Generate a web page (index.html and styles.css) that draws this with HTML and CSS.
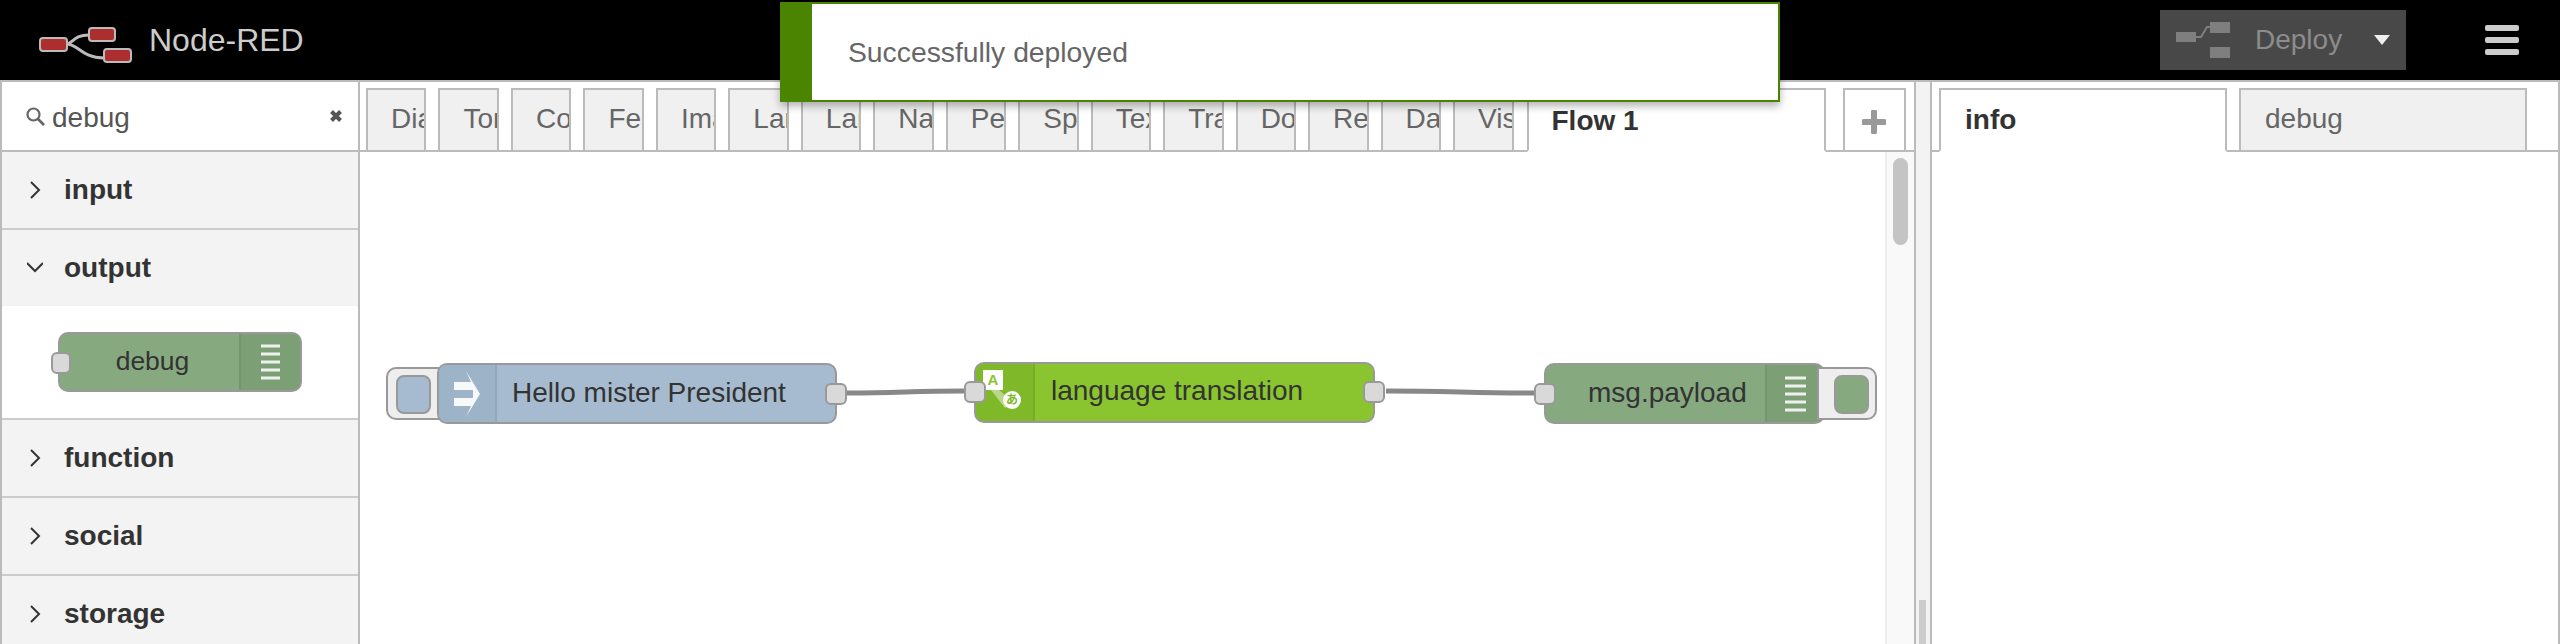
FILE: index.html
```html
<!DOCTYPE html>
<html lang="en">
<head>
    <meta charset="UTF-8">
    <title>Node-RED</title>
    <link rel="stylesheet" href="styles.css">
</head>
<body>
    <div class="header">
        <div class="brand">
            <svg class="logo" width="96" height="38" viewBox="0 0 96 38">
                <path d="M27 12 C 34 12, 34 3, 50 3 M27 12 C 40 12, 42 26, 65 26" transform="translate(0 5)" fill="none" stroke="#bbb" stroke-width="3"/>
                <rect x="1" y="11" width="27" height="13" rx="3" fill="#ad2e2e" stroke="#bbb" stroke-width="2"/>
                <rect x="50" y="1" width="26" height="13" rx="3" fill="#ad2e2e" stroke="#bbb" stroke-width="2"/>
                <rect x="65" y="22" width="27" height="13" rx="3" fill="#ad2e2e" stroke="#bbb" stroke-width="2"/>
            </svg>
            <span class="brand-name">Node-RED</span>
        </div>
        <div class="header-tools">
            <div class="deploy">
                <svg width="54" height="36" viewBox="0 0 54 36">
                    <rect x="0" y="10" width="20" height="10" fill="#7f7f7f"/>
                    <path d="M20 15 L25 15 L31 5 L34 5" fill="none" stroke="#7f7f7f" stroke-width="2"/>
                    <rect x="34" y="0" width="20" height="11" fill="#7f7f7f"/>
                    <rect x="34" y="25" width="20" height="11" fill="#7f7f7f"/>
                </svg>
                <span class="deploy-label">Deploy</span>
                <svg width="16" height="10" viewBox="0 0 16 10"><path d="M0 0 H16 L8 10 Z" fill="#eee"/></svg>
            </div>
            <div class="menu-btn">
                <span></span>
                <span></span>
                <span></span>
            </div>
        </div>
    </div>

    <div class="toast">
        <div class="toast-bar"></div>
        <div class="toast-text">Successfully deployed</div>
    </div>

    <div class="main">
        <div class="palette">
            <div class="search">
                <svg width="19" height="19" viewBox="0 0 19 19">
                    <circle cx="7.5" cy="7.5" r="6" fill="none" stroke="#666" stroke-width="2.2"/>
                    <path d="M12 12 L18 18" stroke="#666" stroke-width="2.6"/>
                </svg>
                <span class="search-text">debug</span>
                <svg class="search-clear" width="14" height="14" viewBox="0 0 14 14">
                    <path d="M2.5 2.5 L11.5 11.5 M11.5 2.5 L2.5 11.5" stroke="#555" stroke-width="4"/>
                </svg>
            </div>

            <div class="category">
                <svg class="chevron" width="16" height="18" viewBox="0 0 16 18"><path d="M4 1 L12 9 L4 17" fill="none" stroke="#333" stroke-width="2"/></svg>
                <span>input</span>
            </div>
            <div class="category open">
                <svg class="chevron" width="16" height="18" viewBox="0 0 16 18"><path d="M0 5 L8 13 L16 5" fill="none" stroke="#333" stroke-width="2"/></svg>
                <span>output</span>
            </div>
            <div class="category-body">
                <div class="palette-node">
                    <div class="port palette-port"></div>
                    <div class="palette-label">debug</div>
                    <div class="node-icon icon-right">
                        <svg width="19" height="36" viewBox="0 0 19 36"><path d="M0 2 H19 M0 10 H19 M0 18 H19 M0 26 H19 M0 34 H19" stroke="#eef2ec" stroke-width="3"/></svg>
                    </div>
                </div>
            </div>
            <div class="category">
                <svg class="chevron" width="16" height="18" viewBox="0 0 16 18"><path d="M4 1 L12 9 L4 17" fill="none" stroke="#333" stroke-width="2"/></svg>
                <span>function</span>
            </div>
            <div class="category">
                <svg class="chevron" width="16" height="18" viewBox="0 0 16 18"><path d="M4 1 L12 9 L4 17" fill="none" stroke="#333" stroke-width="2"/></svg>
                <span>social</span>
            </div>
            <div class="category">
                <svg class="chevron" width="16" height="18" viewBox="0 0 16 18"><path d="M4 1 L12 9 L4 17" fill="none" stroke="#333" stroke-width="2"/></svg>
                <span>storage</span>
            </div>
        </div>

        <div class="workspace">
            <div class="tabs">
                <div class="tab small-tab"><span>Dial</span></div>
                <div class="tab small-tab"><span>Tone</span></div>
                <div class="tab small-tab"><span>Conv</span></div>
                <div class="tab small-tab"><span>Feat</span></div>
                <div class="tab small-tab"><span>Imag</span></div>
                <div class="tab small-tab"><span>Lang</span></div>
                <div class="tab small-tab"><span>Lang</span></div>
                <div class="tab small-tab"><span>Natu</span></div>
                <div class="tab small-tab"><span>Pers</span></div>
                <div class="tab small-tab"><span>Spee</span></div>
                <div class="tab small-tab"><span>Text</span></div>
                <div class="tab small-tab"><span>Tran</span></div>
                <div class="tab small-tab"><span>Docu</span></div>
                <div class="tab small-tab"><span>Retr</span></div>
                <div class="tab small-tab"><span>Data</span></div>
                <div class="tab small-tab"><span>Visu</span></div>
                <div class="tab active flow-tab">Flow 1</div>
                <div class="add-tab">
                    <svg width="24" height="24" viewBox="0 0 24 24"><path d="M12 2 V22 M2 12 H22" stroke="#999" stroke-width="6" stroke-linecap="round"/></svg>
                </div>
            </div>

            <div class="canvas-wrap">
                <div class="canvas">
                    <svg class="wires" width="1525" height="492" viewBox="0 0 1525 492">
                        <path d="M487 241 C 540 241, 550 239, 604 239" fill="none" stroke="#888" stroke-width="5"/>
                        <path d="M1026 239 C 1090 239, 1110 241, 1174 241" fill="none" stroke="#888" stroke-width="5"/>
                    </svg>

                    <div class="node-tail inject-tail"><div class="tail-btn blue"></div></div>
                    <div class="node blue node-hello">
                        <div class="node-icon icon-blue">
                            <svg width="26" height="48" viewBox="0 0 26 48">
                                <path d="M12 1 L26 24 L12 47 L17 36 H0 V28 H19 V20 H0 V12 H17 Z" fill="#fff" fill-opacity="0.92"/>
                            </svg>
                        </div>
                        <div class="node-label">Hello mister President</div>
                        <div class="port port-out"></div>
                    </div>

                    <div class="node lime node-lang">
                        <div class="port port-in"></div>
                        <div class="node-icon icon-lime">
                            <svg width="44" height="46" viewBox="0 0 44 46">
                                <path d="M12 16 L30 33 L22 38 L8 20 Z" fill="#fff" fill-opacity="0.45"/>
                                <rect x="0" y="0" width="20" height="20" fill="#fff"/>
                                <circle cx="29" cy="30" r="9" fill="#fff"/>
                                <text x="10" y="15" class="icon-a">A</text>
                                <text x="29" y="34" class="icon-b">あ</text>
                            </svg>
                        </div>
                        <div class="node-label">language translation</div>
                        <div class="port port-out"></div>
                    </div>

                    <div class="node green node-debug">
                        <div class="port port-in"></div>
                        <div class="node-label">msg.payload</div>
                        <div class="node-icon icon-right">
                            <svg width="21" height="36" viewBox="0 0 21 36"><path d="M0 2 H21 M0 10 H21 M0 18 H21 M0 26 H21 M0 34 H21" stroke="#eef2ec" stroke-width="3"/></svg>
                        </div>
                    </div>
                    <div class="node-tail debug-tail"><div class="tail-btn green"></div></div>
                </div>
                <div class="scrollbar"><div class="scroll-thumb"></div></div>
            </div>
        </div>

        <div class="separator"><div class="separator-thumb"></div></div>

        <div class="sidebar">
            <div class="tabs sidebar-tabs">
                <div class="tab active side-tab">info</div>
                <div class="tab side-tab">debug</div>
            </div>
        </div>
    </div>
</body>
</html>
```

FILE: styles.css
```css
* {
    box-sizing: border-box;
}

html, body {
    height: 100%;
    margin: 0;
    overflow: hidden;
}

body {
    font-family: "Liberation Sans", Arial, sans-serif;
    font-size: 28px;
    color: #333;
    background-color: #fff;
}

/* header */
.header {
    height: 80px;
    background-color: #000;
    display: flex;
    justify-content: space-between;
    align-items: center;
}

.brand {
    display: flex;
    align-items: center;
    padding-left: 39px;
    gap: 14px;
}

.logo {
    margin-top: 12px;
}

.brand-name {
    font-size: 32px;
    color: #ccc;
}

.header-tools {
    display: flex;
    align-items: center;
    padding-right: 41px;
}

.deploy {
    width: 246px;
    height: 60px;
    background-color: #484848;
    display: flex;
    align-items: center;
    padding-left: 16px;
}

.deploy-label {
    color: #8c8c8c;
    margin-left: 25px;
    margin-right: 32px;
}

.menu-btn {
    width: 34px;
    margin-left: 79px;
    display: flex;
    flex-direction: column;
    gap: 6px;
}

.menu-btn span {
    height: 6px;
    border-radius: 2px;
    background-color: #ccc;
}

/* deploy message */
.toast {
    position: absolute;
    top: 2px;
    left: 780px;
    width: 1000px;
    height: 100px;
    display: flex;
    background-color: #fff;
    border: 2px solid #4b8400;
    box-shadow: 0 4px 8px rgba(0, 0, 0, 0.3);
    z-index: 10;
}

.toast-bar {
    width: 30px;
    background-color: #4b8400;
}

.toast-text {
    color: #666;
    font-size: 28.3px;
    padding: 32px 0 0 36px;
}

/* main area */
.main {
    height: 564px;
    display: flex;
    border-top: 2px solid #bbb;
}

.palette {
    width: 360px;
    flex: none;
    border-left: 2px solid #bbb;
    border-right: 2px solid #bbb;
    overflow: hidden;
}

.search {
    height: 70px;
    display: flex;
    align-items: center;
    padding-left: 24px;
    padding-right: 15px;
    border-bottom: 2px solid #bbb;
    color: #555;
}

.search-text {
    margin-left: 7px;
    margin-top: 4px;
}

.search-clear {
    margin-left: auto;
}

.category {
    height: 78px;
    display: flex;
    align-items: center;
    background-color: #f3f3f3;
    border-bottom: 2px solid #ccc;
    font-weight: bold;
    padding-left: 25px;
}

.category span {
    margin-left: 21px;
}

.category.open {
    height: 76px;
    border-bottom: none;
    padding-bottom: 2px;
}

.category.open span {
    margin-top: 2px;
}

.chevron {
    flex: none;
}

.category-body {
    height: 114px;
    padding: 26px 0 0 56px;
    border-bottom: 2px solid #ccc;
}

.palette-node {
    position: relative;
    width: 244px;
    height: 60px;
    display: flex;
    background-color: #87a980;
    border: 2px solid #999;
    border-radius: 10px;
}

.palette-label {
    flex: 1;
    text-align: center;
    font-size: 26.5px;
    line-height: 54px;
    padding-left: 6px;
}

.port {
    position: absolute;
    width: 22px;
    height: 22px;
    background-color: #d9d9d9;
    border: 2px solid #999;
    border-radius: 6px;
}

.palette-port {
    left: -9px;
    top: 18px;
    width: 20px;
}

/* node parts */
.node-icon {
    display: flex;
    align-items: center;
    justify-content: center;
    flex: none;
}

.icon-right {
    width: 61px;
    background-color: #7d9f76;
    border-left: 2px solid #76966f;
    border-radius: 0 8px 8px 0;
}

.node-debug .icon-right {
    width: 58px;
}

.icon-blue {
    width: 58px;
    background-color: #9db3c8;
    border-right: 2px solid #92a8bd;
    border-radius: 8px 0 0 8px;
}

.icon-lime {
    width: 59px;
    background-color: #7fb829;
    border-right: 2px solid #76ad24;
    border-radius: 8px 0 0 8px;
}

.icon-a {
    font-size: 15px;
    font-weight: bold;
    fill: #8ac52f;
    text-anchor: middle;
}

.icon-b {
    font-family: "Noto Sans CJK JP", sans-serif;
    font-size: 12px;
    font-weight: bold;
    fill: #7fb829;
    text-anchor: middle;
}

/* tabs */
.workspace {
    width: 1556px;
    flex: none;
    display: flex;
    flex-direction: column;
    border-right: 2px solid #bbb;
}

.tabs {
    height: 70px;
    flex: none;
    display: flex;
    align-items: flex-end;
    padding-left: 6px;
    gap: 12px;
    border-bottom: 2px solid #bbb;
}

.tab {
    height: 64px;
    margin-bottom: -2px;
    background-color: #f0f0f0;
    border: 2px solid #bbb;
    color: #666;
    overflow: hidden;
    white-space: nowrap;
}

.small-tab {
    width: 60.47px;
    padding: 13px 0 0 23px;
}

.small-tab span {
    display: block;
    overflow: hidden;
}

.tab.active {
    background-color: #fff;
    border-bottom-color: #fff;
    color: #333;
    font-weight: bold;
}

.flow-tab {
    width: 299px;
    margin-left: 1px;
    padding: 15px 0 0 23px;
}

.add-tab {
    width: 63px;
    height: 62px;
    margin-left: 5px;
    margin-bottom: 0;
    border: 2px solid #bbb;
    border-bottom: none;
    display: flex;
    align-items: center;
    justify-content: center;
    padding-top: 4px;
}

.side-tab {
    width: 288px;
    padding: 13px 0 0 24px;
}

.tab.active.side-tab {
    padding-top: 14px;
}

.sidebar-tabs {
    padding-left: 7px;
}

.canvas-wrap {
    flex: 1;
    display: flex;
    min-height: 0;
}

.canvas {
    position: relative;
    width: 1525px;
    height: 100%;
    flex: none;
}

.wires {
    position: absolute;
    left: 0;
    top: 0;
}

.scrollbar {
    flex: 1;
    padding: 6px 6px 0 6px;
    background-color: #f9f9f9;
    border-left: 2px solid #eee;
}

.scroll-thumb {
    height: 87px;
    border-radius: 8px;
    background-color: #c4c4c4;
}

/* flow nodes */
.node {
    position: absolute;
    height: 61px;
    display: flex;
    border: 2px solid #999;
    border-radius: 10px;
}

.node-label {
    flex: 1;
    line-height: 55px;
    white-space: nowrap;
}

.blue {
    background-color: #a6bbcf;
}

.green {
    background-color: #87a980;
}

.lime {
    background-color: #8ac52f;
}

.node-hello {
    left: 77px;
    top: 211px;
    width: 400px;
}

.node-hello .node-label {
    padding-left: 15px;
}

.node-lang {
    left: 614px;
    top: 210px;
    width: 401px;
}

.node-lang .node-label {
    padding-left: 16px;
    line-height: 54px;
}

.node-debug {
    left: 1184px;
    top: 211px;
    width: 281px;
}

.node-debug .node-label {
    padding-left: 42px;
}

.port-out {
    right: -12px;
    top: 18px;
}

.port-in {
    left: -12px;
    top: 18px;
}

.node-lang .port-in,
.node-lang .port-out {
    top: 17px;
}

.node-tail {
    position: absolute;
    top: 215px;
    width: 60px;
    height: 53px;
    background-color: #eee;
    border: 2px solid #999;
    padding-top: 6px;
}

.inject-tail {
    left: 26px;
    border-radius: 10px 0 0 10px;
    padding-left: 8px;
}

.debug-tail {
    left: 1457px;
    border-radius: 0 10px 10px 0;
    padding-left: 15px;
}

.tail-btn {
    width: 35px;
    height: 39px;
    border: 2px solid #999;
    border-radius: 8px;
}

/* right side */
.separator {
    width: 14px;
    flex: none;
    background-color: #f3f3f3;
    position: relative;
}

.separator-thumb {
    position: absolute;
    left: 3px;
    bottom: 0;
    width: 7px;
    height: 44px;
    background-color: #ccc;
}

.sidebar {
    flex: 1;
    border-left: 2px solid #bbb;
    border-right: 2px solid #bbb;
}
```
